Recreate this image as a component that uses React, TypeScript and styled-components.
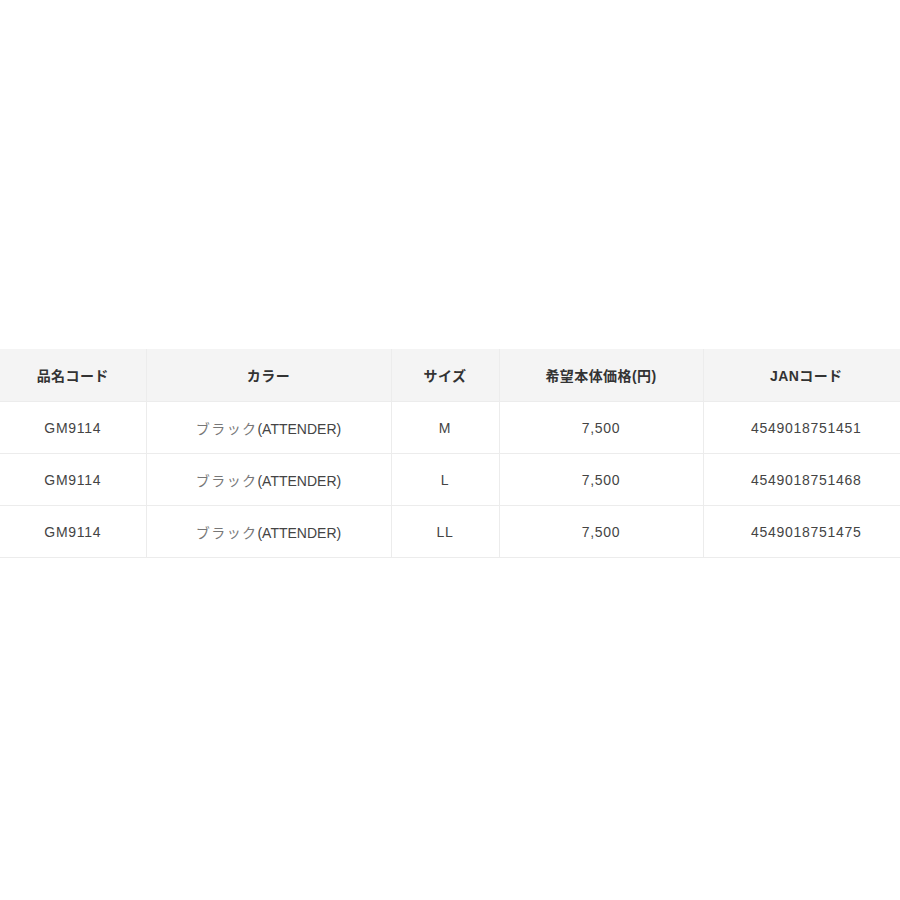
import React from 'react';
import styled, { createGlobalStyle } from 'styled-components';

const GlobalStyle = createGlobalStyle`
  html, body {
    margin: 0;
    padding: 0;
    background: #ffffff;
  }
  body {
    font-family: "Liberation Sans", "Noto Sans CJK JP", sans-serif;
    color: #333333;
  }
`;

type Row = {
  code: string;
  kana: string;
  colorName: string;
  size: string;
  price: string;
  jan: string;
};

const rows: Row[] = [
  { code: 'GM9114', kana: 'ブラック', colorName: '(ATTENDER)', size: 'M', price: '7,500', jan: '4549018751451' },
  { code: 'GM9114', kana: 'ブラック', colorName: '(ATTENDER)', size: 'L', price: '7,500', jan: '4549018751468' },
  { code: 'GM9114', kana: 'ブラック', colorName: '(ATTENDER)', size: 'LL', price: '7,500', jan: '4549018751475' }
];

const headers = ['品名コード', 'カラー', 'サイズ', '希望本体価格(円)', 'JANコード'];
const widths = [146, 245, 108, 204, 197];

const Page = styled.div`
  width: 900px;
  height: 900px;
  padding-top: 349px;
  box-sizing: border-box;
`;

const Table = styled.table`
  width: 900px;
  border-collapse: collapse;
  table-layout: fixed;
`;

const HeadCell = styled.th`
  height: 52px;
  padding: 0;
  background: #f4f4f4;
  border: 1px solid #ececec;
  border-top: none;
  font-size: 14px;
  font-weight: 700;
  letter-spacing: 0.03em;
  color: #333333;
  text-align: center;
  vertical-align: middle;

  &:first-child {
    border-left: none;
  }

  &:last-child {
    border-right: none;
    padding-left: 9px;
  }
`;

const BodyCell = styled.td<{ $numeric?: boolean }>`
  height: 51px;
  padding: 0;
  border: 1px solid #ececec;
  font-size: 14px;
  font-weight: 400;
  letter-spacing: ${({ $numeric }) => ($numeric ? '0.05em' : '0')};
  color: #444444;
  text-align: center;
  vertical-align: middle;

  &:first-child {
    border-left: none;
  }

  &:last-child {
    border-right: none;
    padding-left: 9px;
  }
`;

const Kana = styled.span`
  letter-spacing: 0.1em;
  color: #777777;
`;

const App: React.FC = () => {
  return (
    <>
      <GlobalStyle />
      <Page>
        <Table>
          <colgroup>
            {widths.map((w, i) => (
              <col key={i} style={{ width: w }} />
            ))}
          </colgroup>
          <thead>
            <tr>
              {headers.map((h) => (
                <HeadCell key={h}>{h}</HeadCell>
              ))}
            </tr>
          </thead>
          <tbody>
            {rows.map((r) => (
              <tr key={r.jan}>
                <BodyCell $numeric>{r.code}</BodyCell>
                <BodyCell>
                  <Kana>{r.kana}</Kana>
                  {r.colorName}
                </BodyCell>
                <BodyCell $numeric>{r.size}</BodyCell>
                <BodyCell $numeric>{r.price}</BodyCell>
                <BodyCell $numeric>{r.jan}</BodyCell>
              </tr>
            ))}
          </tbody>
        </Table>
      </Page>
    </>
  );
};

export default App;
